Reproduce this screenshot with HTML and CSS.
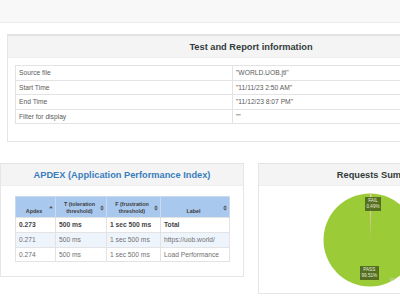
FILE: index.html
```html
<!DOCTYPE html>
<html>
<head>
<meta charset="utf-8">
<link rel="stylesheet" href="styles.css">
</head>
<body>
<div class="topbar"></div>
<div class="page">
  <section class="card card-info">
    <div class="card-head"><h2>Test and Report information</h2></div>
    <div class="card-body">
      <table class="info">
        <tr><td class="k">Source file</td><td>"WORLD.UOB.jtl"</td></tr>
        <tr><td class="k">Start Time</td><td>"11/11/23 2:50 AM"</td></tr>
        <tr><td class="k">End Time</td><td>"11/12/23 8:07 PM"</td></tr>
        <tr><td class="k">Filter for display</td><td>""</td></tr>
      </table>
    </div>
  </section>
  <div class="row">
    <section class="card card-apdex">
      <div class="card-head"><h2 class="blue">APDEX (Application Performance Index)</h2></div>
      <div class="card-body">
        <table class="apdex">
          <thead>
            <tr>
              <th class="c1"><span>Apdex</span><svg class="sort" viewBox="0 0 4 6"><path d="M0 3.2h4L2 1z" fill="#555"/></svg></th>
              <th class="c2"><span>T (toleration<br>threshold)</span><svg class="sort" viewBox="0 0 4 6"><path d="M0 2.6h4L2 0.4zM0 3.4h4L2 5.6z" fill="#555"/></svg></th>
              <th class="c3"><span>F (frustration<br>threshold)</span><svg class="sort" viewBox="0 0 4 6"><path d="M0 2.6h4L2 0.4zM0 3.4h4L2 5.6z" fill="#555"/></svg></th>
              <th class="c4"><span>Label</span><svg class="sort" viewBox="0 0 4 6"><path d="M0 2.6h4L2 0.4zM0 3.4h4L2 5.6z" fill="#555"/></svg></th>
            </tr>
          </thead>
          <tbody>
            <tr class="total"><td>0.273</td><td>500 ms</td><td>1 sec 500 ms</td><td>Total</td></tr>
            <tr class="odd"><td>0.271</td><td>500 ms</td><td>1 sec 500 ms</td><td>https://uob.world/</td></tr>
            <tr><td>0.274</td><td>500 ms</td><td>1 sec 500 ms</td><td>Load Performance</td></tr>
          </tbody>
        </table>
      </div>
    </section>
    <section class="card card-summary">
      <div class="card-head"><h2>Requests Summary</h2></div>
      <div class="card-body pie-body">
        <div class="pie-wrap">
          <svg class="pie" viewBox="0 0 94 94">
            <circle cx="47" cy="47" r="46.5" fill="#9bcb36"/>
            <path d="M47 47 L47 0.5 A46.5 46.5 0 0 1 48.4 0.52 Z" fill="#f2c4bb"/>
          </svg>
          <div class="plabel fail">FAIL<br>0.49%</div>
          <div class="plabel pass">PASS<br>99.51%</div>
        </div>
        <div class="legend">to</div>
      </div>
    </section>
  </div>
</div>
</body>
</html>
```

FILE: styles.css
```css
html, body {
  margin: 0;
  padding: 0;
  overflow: hidden;
  background: #fff;
  font-family: "Liberation Sans", Arial, sans-serif;
  color: #555;
}
.topbar {
  height: 22px;
  background: #f8f8f8;
  border-bottom: 1px solid #ececec;
}
.page {
  width: 600px;
}
.card {
  border: 1px solid #e6e6e6;
  border-top: 2px solid #e2e2e2;
  background: #fff;
  box-sizing: border-box;
}
.card-head {
  height: 22px;
  background: #f4f4f4;
  border-bottom: 1px solid #eeeeee;
  box-sizing: border-box;
  display: flex;
  align-items: center;
  justify-content: center;
}
.card-head h2 {
  margin: 0;
  font-size: 9.25px;
  font-weight: bold;
  color: #333c3c;
  white-space: nowrap;
}
.card-head h2.blue {
  color: #3a7dbd;
}
.card-info {
  margin: 11px 0 0 7px;
  width: 488px;
}
.card-info .card-body {
  padding: 7px 8px 17px 7px;
}
table {
  border-collapse: collapse;
  width: 100%;
  font-size: 6.7px;
}
.info td {
  border: 1px solid #e3e3e3;
  line-height: 13.6px;
  padding: 0 3px;
  color: #5a5a5a;
  white-space: nowrap;
}
.info td.k {
  width: 210px;
}
.row {
  display: flex;
  gap: 14px;
  margin-top: 21px;
  align-items: flex-start;
}
.card-apdex {
  width: 244px;
  border-top-width: 1px;
}
.card-apdex .card-body {
  padding: 10px 13px 14px 14px;
}
.apdex th {
  background: #a9c8ee;
  font-size: 5.4px;
  font-weight: bold;
  color: #3c3c3c;
  height: 21px;
  box-sizing: border-box;
  padding: 0 6px 2px 3px;
  vertical-align: bottom;
  text-align: center;
  position: relative;
  line-height: 7px;
  border: 1px solid #c9d9ee;
  border-bottom: none;
}
.apdex th span {
  display: block;
}
.apdex .sort {
  position: absolute;
  right: 2px;
  top: 8px;
  width: 4px;
  height: 6px;
}
.apdex .c1 { width: 40px; }
.apdex .c2 { width: 51px; }
.apdex .c3 { width: 54px; }
.apdex td {
  border: 1px solid #e3e3e3;
  line-height: 13.6px;
  padding: 0 3px;
  color: #707070;
  white-space: nowrap;
}
.apdex tr.total td {
  font-weight: bold;
  color: #444;
}
.apdex tr.odd td {
  background: #eef4fc;
}
.card-summary {
  width: 244px;
  border-top-width: 1px;
}
.pie-body {
  height: 107px;
  position: relative;
  display: flex;
  padding: 7px 0 0 64px;
  box-sizing: border-box;
}
.pie-wrap {
  position: relative;
  width: 94px;
  height: 94px;
}
.pie {
  width: 94px;
  height: 94px;
  display: block;
}
.plabel {
  position: absolute;
  background: rgba(72, 95, 30, 0.85);
  color: #e8eed8;
  font-size: 4.6px;
  line-height: 6px;
  text-align: center;
  padding: 1px 1.5px;
}
.plabel.fail {
  left: 42px;
  top: 4px;
}
.plabel.pass {
  left: 37px;
  top: 73px;
}
.legend {
  position: absolute;
  left: 131px;
  top: 90px;
  font-size: 5px;
  color: #d8d8d8;
}
```
